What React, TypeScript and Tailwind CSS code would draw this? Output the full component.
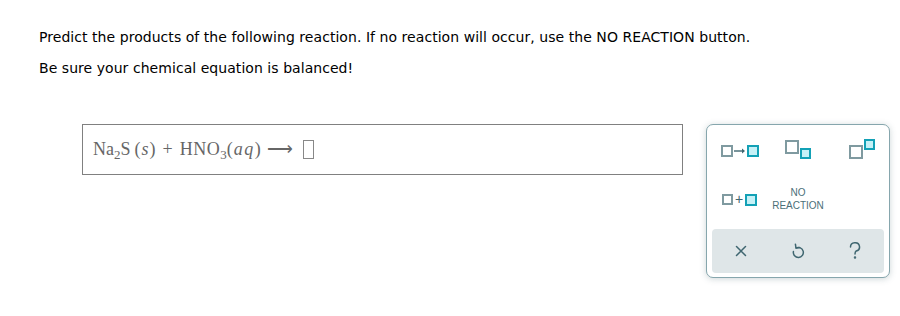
import React from 'react'

const sq = 'box-border border-2 border-[#7f9aa0] bg-white'
const tq = 'box-border border-2 border-[#13a1b6] bg-[#c6f1f7]'
const ink = '#3f6670'

function UndoIcon() {
  return (
    <svg width="16" height="18" viewBox="0 0 16 18" fill="none" stroke={ink} strokeWidth="1.5" strokeLinecap="round" strokeLinejoin="round">
      <path d="M6 6 A5 5 0 1 1 3.4 9.6" />
      <path d="M5.4 2.2 L6 6 L9.6 5.4" />
    </svg>
  )
}

function HelpIcon() {
  return (
    <svg width="12" height="18" viewBox="0 0 12 18" fill="none" stroke={ink} strokeWidth="1.5" strokeLinecap="round">
      <path d="M1.5 5 A4.5 4.2 0 1 1 7.2 9 C6.2 9.6 6 10.4 6 12" />
      <circle cx="6" cy="15.6" r="0.5" fill={ink} />
    </svg>
  )
}

export default function App() {
  return (
    <div className="w-[900px] h-[316px] bg-white pt-[29px] pl-[39px]">
      {/* Prompt */}
      <div className="text-[14px] leading-[16px] tracking-[0.05px] text-black" style={{ fontFamily: '"DejaVu Sans", Verdana, sans-serif' }}>
        <p>Predict the products of the following reaction. If no reaction will occur, use the NO REACTION button.</p>
        <p className="mt-[15px]">Be sure your chemical equation is balanced!</p>
      </div>

      <div className="flex items-start mt-[48px] ml-[43px]">
        {/* Equation box */}
        <div
          className="w-[601px] h-[51px] border border-[#808080] flex items-center pl-[10px] text-[18px] text-[#666]"
          style={{ fontFamily: '"Liberation Serif", "Times New Roman", serif' }}
        >
          <span>Na</span>
          <span className="text-[13px] translate-y-[5px]">2</span>
          <span>S</span>
          <span className="ml-[4px]">(<i className="px-[1px]">s</i>)</span>
          <span className="mx-[7px]">+</span>
          <span className="tracking-[0.5px]">HNO</span>
          <span className="text-[13px] translate-y-[5px]">3</span>
          <span>(<i className="tracking-[1.5px] pl-[1px]">aq</i>)</span>
          <span className="ml-[6px]">⟶</span>
          <span className="ml-[10px] w-[11px] h-[19px] border border-[#888] box-border inline-block" />
        </div>

        {/* Palette */}
        <div className="ml-[23px] w-[184px] h-[154px] rounded-[7px] border border-[#86a6ad] bg-white shadow-[0_1px_6px_rgba(60,90,100,0.25)] flex flex-col px-[5px] pb-[4px]">
          <div className="grid grid-cols-3 h-[35px] items-end pb-[1px]">
            <div className="flex items-center pl-[9px] h-[12px] mb-[2px]">
              <div className={`${sq} w-[12px] h-[12px]`} />
              <svg width="14" height="8" viewBox="0 0 14 8">
                <path d="M1 4 H11" stroke={ink} strokeWidth="1.4" />
                <path d="M9 1.5 L12 4 L9 6.5 Z" fill={ink} />
              </svg>
              <div className={`${tq} w-[12px] h-[12px]`} />
            </div>
            <div className="flex justify-center">
              <div className="relative w-[26px] h-[19px]">
                <div className={`${sq} absolute left-0 top-0 w-[14px] h-[14px]`} />
                <div className={`${tq} absolute left-[15px] top-[8px] w-[11px] h-[11px]`} />
              </div>
            </div>
            <div className="flex justify-end pr-[9px]">
              <div className="relative w-[26px] h-[21px]">
                <div className={`${sq} absolute left-0 top-[7px] w-[14px] h-[14px]`} />
                <div className={`${tq} absolute left-[15px] top-[1px] w-[11px] h-[11px]`} />
              </div>
            </div>
          </div>

          <div className="grid grid-cols-3 h-[33px] mt-[22px]">
            <div className="flex items-center pl-[10px] pt-[2px]">
              <div className={`${sq} w-[11px] h-[11px]`} />
              <span className="text-[14px] leading-none text-[#3f6670] mx-[2px] relative -top-[1px]" style={{ fontFamily: '"Liberation Sans", Arial, sans-serif' }}>+</span>
              <div className={`${tq} w-[12px] h-[12px]`} />
            </div>
            <div
              className="flex flex-col items-center justify-center text-[10px] leading-[13px] text-[#4b6f78] mt-[1px]"
              style={{ fontFamily: '"Liberation Sans", Arial, sans-serif' }}
            >
              <span>NO</span>
              <span>REACTION</span>
            </div>
            <div />
          </div>

          <div className="mt-auto h-[44px] rounded-[4px] bg-[#dfe6e8] grid grid-cols-3 items-center justify-items-center">
            <svg width="12" height="12" viewBox="0 0 12 12" stroke={ink} strokeWidth="1.5" strokeLinecap="round">
              <path d="M1.5 1.5 L10.5 10.5 M10.5 1.5 L1.5 10.5" />
            </svg>
            <UndoIcon />
            <HelpIcon />
          </div>
        </div>
      </div>
    </div>
  )
}
